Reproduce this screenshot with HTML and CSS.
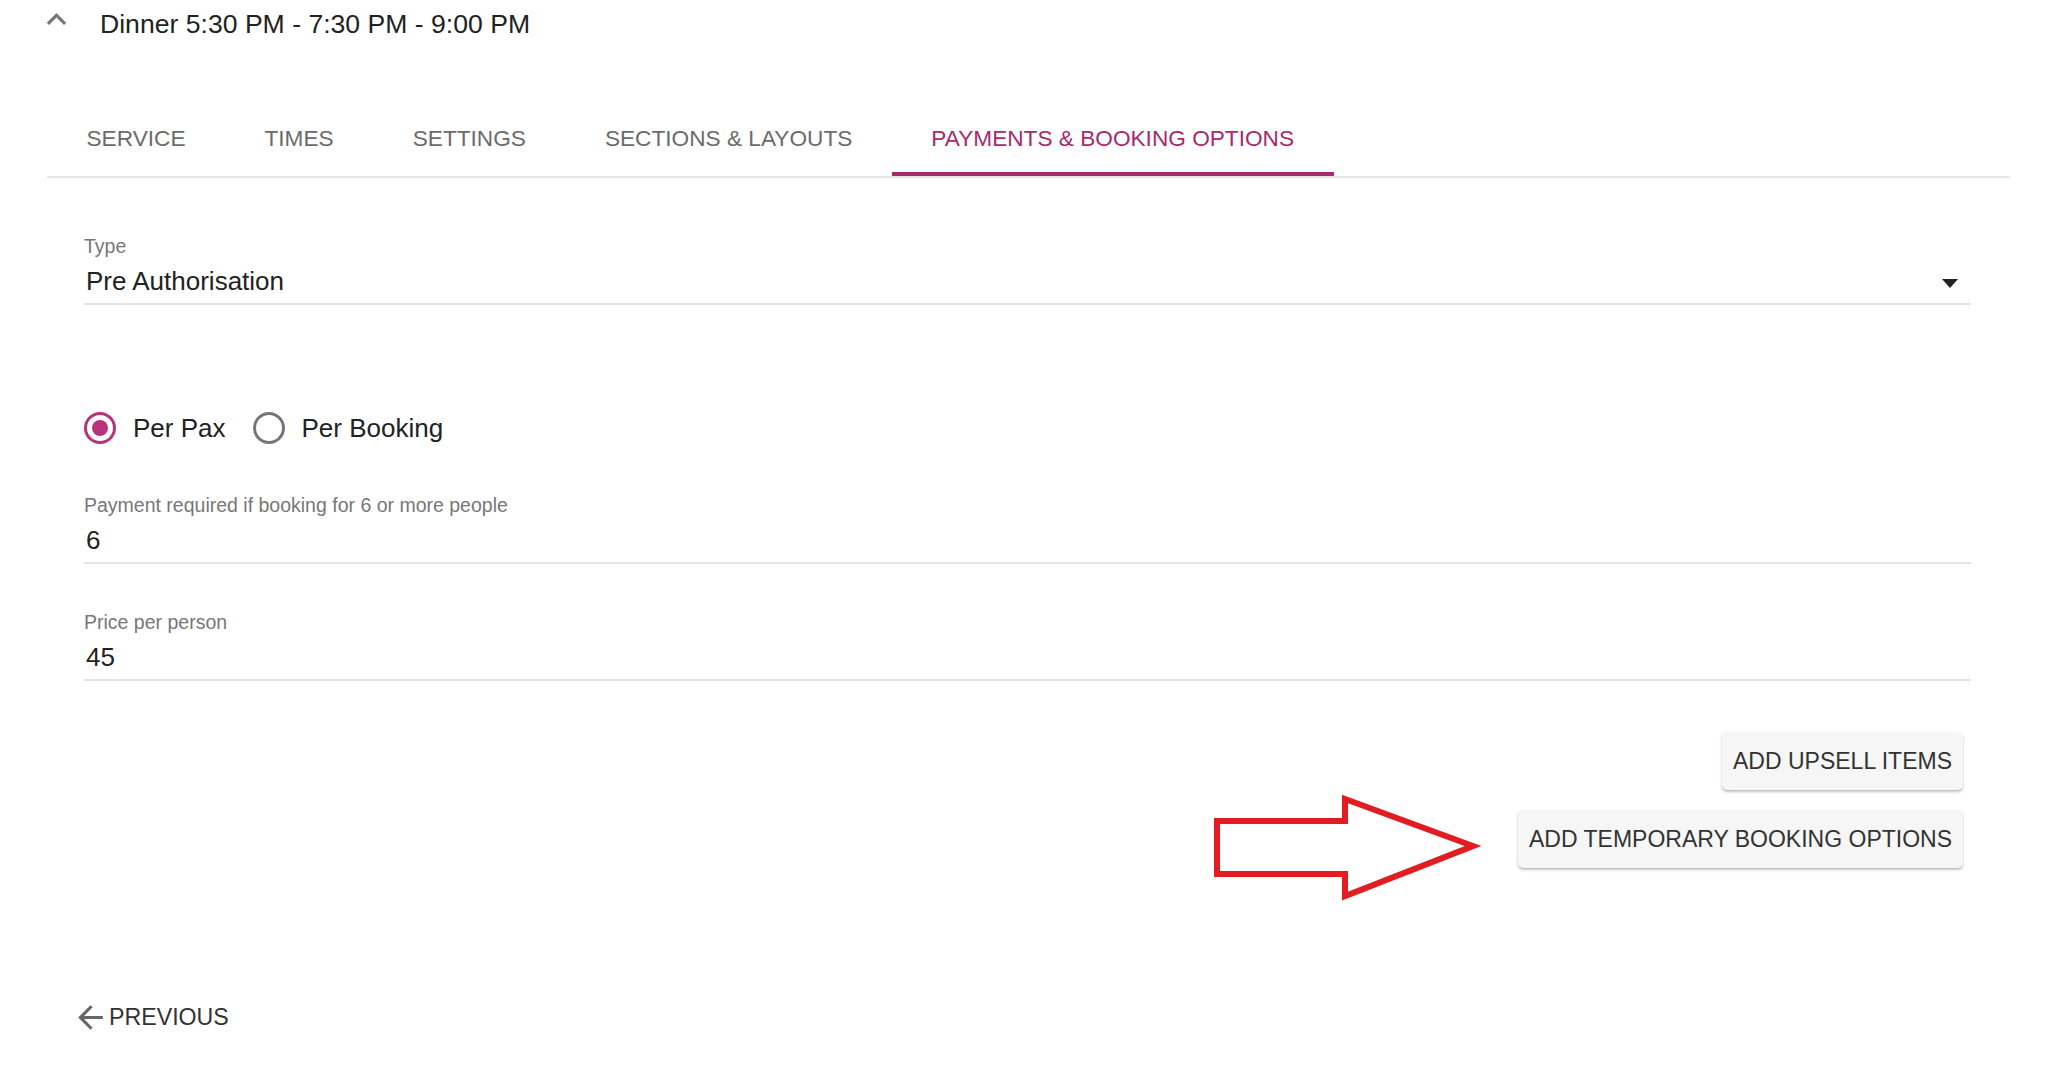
FILE: index.html
```html
<!DOCTYPE html>
<html lang="en">
<head>
    <meta charset="UTF-8">
    <meta name="viewport" content="width=device-width, initial-scale=1.0">
    <title>Service - Payments & Booking Options</title>
    <link rel="stylesheet" href="styles.css">
</head>
<body>

    <div class="service-header">
        <svg class="expand-icon" viewBox="0 0 24 24"><path d="M12 8l-6 6 1.41 1.41L12 10.83l4.59 4.58L18 14z"/></svg>
        <h1>Dinner 5:30 PM - 7:30 PM - 9:00 PM</h1>
    </div>

    <div class="tabs">
        <div class="tab">SERVICE</div>
        <div class="tab">TIMES</div>
        <div class="tab">SETTINGS</div>
        <div class="tab">SECTIONS &amp; LAYOUTS</div>
        <div class="tab active">PAYMENTS &amp; BOOKING OPTIONS</div>
    </div>

    <div class="form">
        <div class="field">
            <label>Type</label>
            <div class="value select">
                <span>Pre Authorisation</span>
                <span class="caret"></span>
            </div>
        </div>

        <div class="radios">
            <div class="radio checked"><span class="circle"></span>Per Pax</div>
            <div class="radio"><span class="circle"></span>Per Booking</div>
        </div>

        <div class="field">
            <label>Payment required if booking for 6 or more people</label>
            <div class="value">6</div>
        </div>

        <div class="field second">
            <label>Price per person</label>
            <div class="value">45</div>
        </div>

        <div class="actions">
            <button>ADD UPSELL ITEMS</button>
            <button>ADD TEMPORARY BOOKING OPTIONS</button>
        </div>
    </div>

    <div class="footer">
        <button class="prev-btn">
            <svg viewBox="0 0 24 24"><path d="M20 11H7.83l5.59-5.59L12 4l-8 8 8 8 1.41-1.41L7.83 13H20v-2z"/></svg>
            PREVIOUS
        </button>
    </div>

    <!-- annotation pointing at the button -->
    <svg class="annotation" viewBox="0 0 285 125">
        <polygon points="12,35 140,35 140,13 268,60 140,110 140,88 12,88"/>
    </svg>

</body>
</html>
```

FILE: styles.css
```css
body {
    font-family: 'Liberation Sans', Arial, sans-serif;
    background-color: #FFFFFF;
    color: #222;
    margin: 0;
}

.service-header {
    display: flex;
    align-items: center;
    height: 48px;
    padding-left: 37px;
}

.expand-icon {
    width: 39px;
    height: 39px;
    fill: #777;
    align-self: flex-start;
}

h1 {
    font-size: 26.6px;
    font-weight: normal;
    margin: 0 0 0 24px;
}

.tabs {
    display: flex;
    margin: 50px 54px 0 47px;
    border-bottom: 2px solid #e6e6e6;
}

.tab {
    box-sizing: border-box;
    height: 78px;
    padding: 7px 39.5px 0;
    display: flex;
    align-items: center;
    font-size: 22.65px;
    color: #6b6b6b;
    border-bottom: 4px solid transparent;
}

.tab.active {
    color: #a82a6c;
    border-bottom-color: #a82a6c;
}

.form {
    padding: 57px 93px 0 84px;
}

.field label {
    display: block;
    font-size: 19.5px;
    line-height: 22px;
    color: #777;
}

.field .value {
    font-size: 26px;
    line-height: 30px;
    margin-top: 9px;
    padding: 0 0 7px 2px;
    border-bottom: 2px solid #e3e3e3;
}

.field .value.select {
    display: flex;
    justify-content: space-between;
    align-items: center;
    padding-right: 13px;
}

.caret {
    width: 0;
    height: 0;
    border-left: 8px solid transparent;
    border-right: 8px solid transparent;
    border-top: 9px solid #222;
    margin-top: 4px;
}

.radios {
    display: flex;
    align-items: center;
    height: 40px;
    margin: 103px 0 46px;
    font-size: 26px;
}

.radio {
    display: flex;
    align-items: center;
    margin-right: 27px;
}

.radio .circle {
    box-sizing: border-box;
    width: 32px;
    height: 32px;
    border: 3px solid #757575;
    border-radius: 50%;
    margin-right: 17px;
    display: flex;
    align-items: center;
    justify-content: center;
}

.radio.checked .circle {
    border-color: #b8337a;
}

.radio.checked .circle::after {
    content: "";
    width: 16px;
    height: 16px;
    border-radius: 50%;
    background-color: #b8337a;
}

.field.second {
    margin-top: 47px;
}

.actions {
    display: flex;
    flex-direction: column;
    align-items: flex-end;
    gap: 20px;
    margin: 51px 8px 0 0;
}

.actions button {
    height: 58px;
    padding: 0 11px;
    font-family: inherit;
    font-size: 23px;
    color: #333;
    background-color: #f6f6f6;
    border: none;
    border-radius: 5px;
    box-shadow: 0 2px 3px rgba(0, 0, 0, 0.22), 0 1px 1px rgba(0, 0, 0, 0.08);
}

.footer {
    padding: 129px 0 0 72px;
}

.prev-btn {
    display: flex;
    align-items: center;
    height: 40px;
    padding: 0;
    font-family: inherit;
    font-size: 23.2px;
    color: #333;
    background: none;
    border: none;
}

.prev-btn svg {
    width: 37px;
    height: 37px;
    fill: #666;
}

.annotation {
    position: absolute;
    left: 1205px;
    top: 786px;
    width: 285px;
    height: 125px;
    fill: none;
    stroke: #e11d22;
    stroke-width: 6;
}
```
